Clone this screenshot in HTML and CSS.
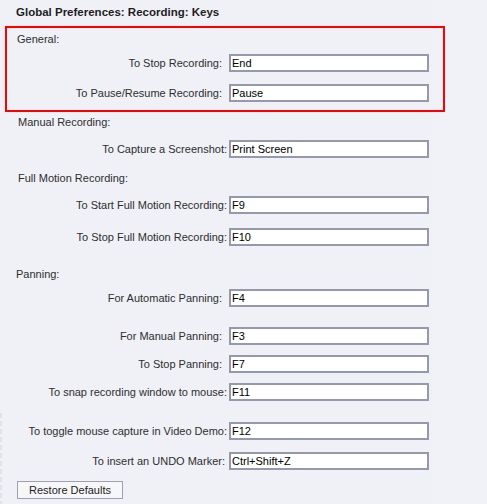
FILE: index.html
```html
<!DOCTYPE html>
<html>
<head>
<meta charset="utf-8">
<link rel="stylesheet" href="styles.css">
</head>
<body>
<div class="page">
  <div class="panel">
    <h1 class="title">Global Preferences: Recording: Keys</h1>
    <div class="group highlight">
      <div class="heading">General:</div>
      <div class="row g6"><label class="sp">To Stop Recording:</label><input type="text" value="End"></div>
      <div class="row g12"><label class="sp">To Pause/Resume Recording:</label><input type="text" value="Pause"></div>
    </div>
    <div class="heading h-manual">Manual Recording:</div>
    <div class="row g9"><label>To Capture a Screenshot:</label><input type="text" value="Print Screen"></div>
    <div class="heading g11">Full Motion Recording:</div>
    <div class="row g9"><label>To Start Full Motion Recording:</label><input type="text" value="F9"></div>
    <div class="row g14"><label>To Stop Full Motion Recording:</label><input type="text" value="F10"></div>
    <div class="heading h-pan">Panning:</div>
    <div class="row g6"><label class="sp">For Automatic Panning:</label><input type="text" value="F4"></div>
    <div class="row g20"><label class="sp">For Manual Panning:</label><input type="text" value="F3"></div>
    <div class="row g10"><label class="sp">To Stop Panning:</label><input type="text" value="F7"></div>
    <div class="row g10"><label>To snap recording window to mouse:</label><input type="text" value="F11"></div>
    <div class="row g21"><label>To toggle mouse capture in Video Demo:</label><input type="text" value="F12"></div>
    <div class="row g12"><label class="sp2">To insert an UNDO Marker:</label><input type="text" value="Ctrl+Shift+Z"></div>
    <div class="actions"><button type="button" class="btn">Restore Defaults</button></div>
  </div>
</div>
</body>
</html>
```
FILE: styles.css
```css
html, body {
  margin: 0;
  padding: 0;
}
body {
  background: #f0f2f7;
  font-family: "Liberation Sans", Arial, sans-serif;
  font-size: 11px;
  color: #2e2e2e;
  width: 487px;
  height: 504px;
  overflow: hidden;
}
.page {
  position: relative;
  height: 504px;
}
.page::before {
  content: "";
  position: absolute;
  left: 0;
  top: 413px;
  width: 2px;
  height: 91px;
  background: repeating-linear-gradient(to bottom, #e2e3e6 0 5px, transparent 5px 8px);
}
.panel {
  width: 433px;
  height: 504px;
  background: #eff1f6;
}
.title {
  margin: 0;
  padding: 3px 0 0 16px;
  font-size: 11.5px;
  line-height: 18px;
  font-weight: bold;
  color: #1e1e1e;
}
.group.highlight {
  margin: 5px 0 0 5px;
  width: 440px;
  box-sizing: border-box;
  border: 2px solid #ff0000;
  padding: 2px 0 8px;
}
.heading {
  line-height: 18px;
  padding-left: 18px;
}
.highlight .heading {
  padding-left: 10px;
}
.h-manual { margin-top: 1px; }
.h-pan { margin-top: 19px; padding-left: 16px; }
.row {
  display: grid;
  grid-template-columns: 227px 200px;
  column-gap: 2px;
  align-items: center;
  height: 18px;
}
.highlight .row {
  grid-template-columns: 220px 200px;
}
.row label {
  text-align: right;
  white-space: nowrap;
  line-height: 18px;
}
.row label.sp { padding-right: 5px; }
.row label.sp2 { padding-right: 2px; }
.row input {
  box-sizing: border-box;
  width: 200px;
  height: 18px;
  margin: 0;
  border: 2px solid #9499ab;
  background: #fff;
  padding: 0 0 0 1px;
  font-family: "Liberation Sans", Arial, sans-serif;
  font-size: 11px;
  color: #000;
  outline: none;
}
.g6 { margin-top: 6px; }
.g9 { margin-top: 9px; }
.g10 { margin-top: 10px; }
.g11 { margin-top: 11px; }
.g12 { margin-top: 12px; }
.g14 { margin-top: 14px; }
.g20 { margin-top: 20px; }
.g21 { margin-top: 21px; }
.actions {
  margin-top: 11px;
  padding-left: 17px;
}
.btn {
  box-sizing: border-box;
  width: 106px;
  height: 18px;
  margin: 0;
  padding: 0;
  border: 1px solid #9ba0b2;
  background: #f7f7f9;
  font-family: "Liberation Sans", Arial, sans-serif;
  font-size: 11px;
  color: #222;
  border-radius: 0;
}
```
